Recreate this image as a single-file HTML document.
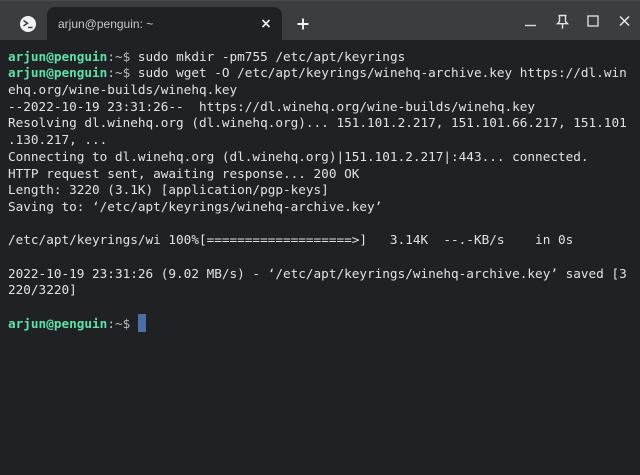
<!DOCTYPE html>
<html><head><meta charset="utf-8"><style>
html,body{margin:0;padding:0;background:#202124;width:640px;height:475px;overflow:hidden}
#bar{position:absolute;left:0;top:0;width:640px;height:40px;background:#3c3d40}
#edge{position:absolute;left:0;top:0;width:640px;height:1px;background:#4a4b4e}
#tab{position:absolute;left:47px;top:7px;width:235px;height:33px;background:#202124;border-radius:8px 8px 0 0}
#tt{position:absolute;left:58px;top:16px;font:12px/16px "Liberation Sans",sans-serif;color:#c6c8cb;filter:blur(.3px)}
svg{position:absolute;left:0;top:0;filter:blur(.3px)}
pre{position:absolute;left:8px;margin:0;font:12.7px/16.7px "DejaVu Sans Mono",monospace;color:#e0e2e5;white-space:pre;filter:blur(.3px)}
b{font-weight:bold;color:#5fe0a8}
i{font-style:normal;color:#b9bcc0}
#cur{position:absolute;left:138px;top:314px;width:8px;height:18px;background:#4a6fa5}
</style></head><body>
<div id="bar"></div><div id="edge"></div><div id="tab"></div>
<div id="tt">arjun@penguin: ~</div>
<svg width="640" height="40" viewBox="0 0 640 40">
<circle cx="28" cy="24" r="8" fill="#f1f3f4"/>
<path d="M23.5 20.5l4 2.7-4 2.7" fill="none" stroke="#3c3d40" stroke-width="1.5"/>
<path d="M28 27.5h4.5" stroke="#3c3d40" stroke-width="1.5"/>
<path d="M262.5 20l7 7M269.5 20l-7 7" stroke="#eceef0" stroke-width="1.6"/>
<path d="M303 18.5v11M297.5 24h11" stroke="#f1f3f4" stroke-width="1.9"/>
<path d="M525 25.5h11" stroke="#d8dadc" stroke-width="1.4"/>
<path d="M558.5 15.5h8M559.5 15.5v6l-2 2.2h10l-2-2.2v-6M562.5 23.7v5" fill="none" stroke="#e0e2e4" stroke-width="1.4"/>
<rect x="588" y="16" width="10" height="10" fill="none" stroke="#d8dadc" stroke-width="1.4"/>
<path d="M620 16.5l9 9M629 16.5l-9 9" stroke="#e6e8ea" stroke-width="1.5"/>
</svg>
<pre style="top:48.6px"><b>arjun@penguin</b><i>:~$</i> sudo mkdir -pm755 /etc/apt/keyrings
<b>arjun@penguin</b><i>:~$</i> sudo wget -O /etc/apt/keyrings/winehq-archive.key https://dl.win
ehq.org/wine-builds/winehq.key
--2022-10-19 23:31:26--  https://dl.winehq.org/wine-builds/winehq.key
Resolving dl.winehq.org (dl.winehq.org)... 151.101.2.217, 151.101.66.217, 151.101
.130.217, ...
Connecting to dl.winehq.org (dl.winehq.org)|151.101.2.217|:443... connected.
HTTP request sent, awaiting response... 200 OK
Length: 3220 (3.1K) [application/pgp-keys]
Saving to: ‘/etc/apt/keyrings/winehq-archive.key’

/etc/apt/keyrings/wi 100%[===================&gt;]   3.14K  --.-KB/s    in 0s

2022-10-19 23:31:26 (9.02 MB/s) - ‘/etc/apt/keyrings/winehq-archive.key’ saved [3
220/3220]

<b>arjun@penguin</b><i>:~$</i> </pre>
<div id="cur"></div>
</body></html>
